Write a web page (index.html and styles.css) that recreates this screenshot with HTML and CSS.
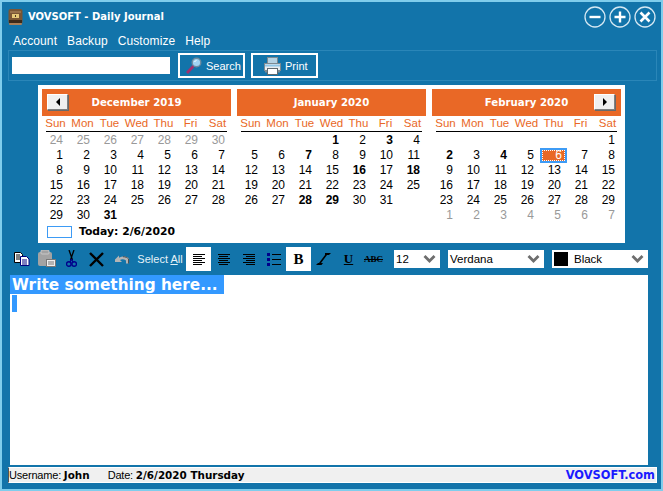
FILE: index.html
```html
<!DOCTYPE html>
<html lang="en">
<head>
<meta charset="utf-8">
<title>VOVSOFT - Daily Journal</title>
<link rel="stylesheet" href="styles.css">
</head>
<body>
<div class="window">
  <header class="titlebar">
    <svg class="logo" width="15" height="16" viewBox="0 0 15 16"><rect x="0.5" y="0" width="14" height="15" rx="2" fill="#7a5533"/><rect x="1" y="11" width="13" height="3" fill="#3d2a1a"/><rect x="1" y="14" width="13" height="2" rx="1" fill="#a9805a"/><rect x="2" y="2" width="11" height="2" fill="#96704a"/><rect x="4" y="5" width="7" height="4" fill="#e6c878"/><rect x="7" y="6" width="1" height="2" fill="#4a3520"/></svg>
    <span class="title">VOVSOFT - Daily Journal</span>
    <div class="winbtns">
      <svg width="22" height="22" viewBox="0 0 22 22"><circle cx="11" cy="11" r="10" fill="none" stroke="#d5e8f3" stroke-width="1.3"/><path d="M5.5 11h11" stroke="#fff" stroke-width="2.4"/></svg>
      <svg width="22" height="22" viewBox="0 0 22 22"><circle cx="11" cy="11" r="10" fill="none" stroke="#d5e8f3" stroke-width="1.3"/><path d="M5.5 11h11M11 5.5v11" stroke="#fff" stroke-width="2.4"/></svg>
      <svg width="22" height="22" viewBox="0 0 22 22"><circle cx="11" cy="11" r="10" fill="none" stroke="#d5e8f3" stroke-width="1.3"/><path d="M6.500 6.500l9 9M15.500 6.500l-9 9" stroke="#fff" stroke-width="2.6"/></svg>
    </div>
  </header>
  <nav class="menu"><span>Account</span><span>Backup</span><span>Customize</span><span>Help</span></nav>
  <div class="searchbar">
    <div class="searchinput"></div>
    <div class="tbtn tbtn-search">
      <svg width="16" height="17" viewBox="0 0 16 17"><path d="M1 16l6.500-7" stroke="#a0306e" stroke-width="2.800"/><circle cx="10.500" cy="5.500" r="4.300" fill="#9fd4f2" stroke="#6d8ba0" stroke-width="1.400"/><path d="M8.500 5a2.500 2.500 0 0 1 2-1.500" stroke="#fff" fill="none"/></svg>
      <span>Search</span>
    </div>
    <div class="tbtn tbtn-print">
      <svg width="17" height="18" viewBox="0 0 17 18"><rect x="3.500" y="0.500" width="10" height="6" fill="#b5d2e3" stroke="#7c8a92"/><rect x="0.500" y="6.500" width="16" height="7" fill="#e8edf0" stroke="#7c8a92"/><rect x="1" y="7.500" width="15" height="2" fill="#8fc6e6"/><rect x="3.500" y="11.500" width="10" height="6" fill="#fff" stroke="#5f6a70"/><rect x="1" y="13.500" width="2" height="2" fill="#7c8a92"/><rect x="14" y="13.500" width="2" height="2" fill="#7c8a92"/></svg>
      <span>Print</span>
    </div>
  </div>

  <section class="calendar">
    <div class="months">
      <div class="month">
        <div class="mhead"><div class="navbtn navbtn-prev"><i class="tri-left"></i></div><span>December 2019</span></div>
        <div class="wdays"><span>Sun</span><span>Mon</span><span>Tue</span><span>Wed</span><span>Thu</span><span>Fri</span><span>Sat</span></div>
        <div class="days">
          <span class="dim">24</span><span class="dim">25</span><span class="dim">26</span><span class="dim">27</span><span class="dim">28</span><span class="dim">29</span><span class="dim">30</span>
          <span>1</span><span>2</span><span>3</span><span>4</span><span>5</span><span>6</span><span>7</span>
          <span>8</span><span>9</span><span>10</span><span>11</span><span>12</span><span>13</span><span>14</span>
          <span>15</span><span>16</span><span>17</span><span>18</span><span>19</span><span>20</span><span>21</span>
          <span>22</span><span>23</span><span>24</span><span>25</span><span>26</span><span>27</span><span>28</span>
          <span>29</span><span>30</span><span class="b">31</span>
        </div>
      </div>
      <div class="month">
        <div class="mhead"><span>January 2020</span></div>
        <div class="wdays"><span>Sun</span><span>Mon</span><span>Tue</span><span>Wed</span><span>Thu</span><span>Fri</span><span>Sat</span></div>
        <div class="days">
          <span></span><span></span><span></span><span class="b">1</span><span>2</span><span class="b">3</span><span>4</span>
          <span>5</span><span>6</span><span class="b">7</span><span>8</span><span>9</span><span>10</span><span>11</span>
          <span>12</span><span>13</span><span>14</span><span>15</span><span class="b">16</span><span>17</span><span class="b">18</span>
          <span>19</span><span>20</span><span>21</span><span>22</span><span>23</span><span>24</span><span>25</span>
          <span>26</span><span>27</span><span class="b">28</span><span class="b">29</span><span>30</span><span>31</span>
        </div>
      </div>
      <div class="month">
        <div class="mhead"><span>February 2020</span><div class="navbtn navbtn-next"><i class="tri-right"></i></div></div>
        <div class="wdays"><span>Sun</span><span>Mon</span><span>Tue</span><span>Wed</span><span>Thu</span><span>Fri</span><span>Sat</span></div>
        <div class="days">
          <span></span><span></span><span></span><span></span><span></span><span></span><span>1</span>
          <span class="b">2</span><span>3</span><span class="b">4</span><span>5</span><span class="sel">6</span><span>7</span><span>8</span>
          <span>9</span><span>10</span><span>11</span><span>12</span><span>13</span><span>14</span><span>15</span>
          <span>16</span><span>17</span><span>18</span><span>19</span><span>20</span><span>21</span><span>22</span>
          <span>23</span><span>24</span><span>25</span><span>26</span><span>27</span><span>28</span><span>29</span>
          <span class="dim">1</span><span class="dim">2</span><span class="dim">3</span><span class="dim">4</span><span class="dim">5</span><span class="dim">6</span><span class="dim">7</span>
        </div>
      </div>
    </div>
    <div class="today"><i class="todaybox"></i><b>Today: 2/6/2020</b></div>
  </section>

  <div class="format">
    <div class="fb"><svg width="16" height="14" viewBox="0 0 16 14"><path d="M.5.5h6l2 2v8h-8z" fill="#fff" stroke="#000"/><path d="M2 3h4M2 5h4M2 7h4" stroke="#000"/><path d="M6.500 4.500h6l2.500 2.500v6.500h-8.500z" fill="#fff" stroke="#000080"/><path d="M8 8h5M8 10h5M8 12h5" stroke="#000080"/></svg></div>
    <div class="fb"><svg width="18" height="18" viewBox="0 0 18 18"><rect x="0" y="2" width="14" height="14" rx="2" fill="#a3a3a3"/><rect x="3" y="0" width="8" height="4" rx="1" fill="#a3a3a3" stroke="#c8c8c8"/><rect x="8.500" y="9.500" width="9" height="7" fill="#eee" stroke="#777"/><path d="M10 12h6M10 14h6" stroke="#777"/></svg></div>
    <div class="fb"><svg width="11" height="18" viewBox="0 0 11 18"><path d="M3 0l3.500 10M8 0L4.500 10" stroke="#000" stroke-width="1.300"/><circle cx="2.800" cy="14" r="2.300" fill="none" stroke="#00008b" stroke-width="1.400"/><circle cx="8.200" cy="14" r="2.300" fill="none" stroke="#00008b" stroke-width="1.400"/><path d="M4 12l1.500-3M7 12L5.500 9" stroke="#00008b" stroke-width="1.300"/></svg></div>
    <div class="fb"><svg width="15" height="15" viewBox="0 0 15 15"><path d="M1 1l13 13M14 1L1 14" stroke="#000" stroke-width="2.400"/></svg></div>
    <div class="fb"><svg width="14" height="9" viewBox="0 0 14 9"><path d="M0 4.500L4 .5v2.200C7 1 11 1 13.500 3v5.500h-2.500V5.500C9 4 6.500 4 5 5l2 2H0z" fill="#b4b4b4"/><path d="M8 1.700c2.500 0 4.500 1 5.500 2.300v4.500" fill="none" stroke="#4f4f4f"/></svg></div>
    <div class="selall">Select <u>A</u>ll</div>
    <div class="fb on"><i class="lines l-left"><s></s><s></s><s></s><s></s><s></s><s></s></i></div>
    <div class="fb"><i class="lines l-center"><s></s><s></s><s></s><s></s><s></s><s></s></i></div>
    <div class="fb"><i class="lines l-right"><s></s><s></s><s></s><s></s><s></s><s></s></i></div>
    <div class="fb"><svg width="14" height="13" viewBox="0 0 14 13"><path d="M0 0h3v3H0zM0 5h3v3H0zM0 10h3v3H0z" fill="#00008b"/><path d="M5 1.500h9M5 6.500h9M5 11.500h9" stroke="#000" stroke-width="1.200"/></svg></div>
    <div class="fb on fmt fmt-b">B</div>
    <div class="fb"><svg width="15" height="12" viewBox="0 0 15 12"><path d="M9 0h6L13 2h-2L5 10h2l-1.500 2H0l2-2h1L9 2z" fill="#000"/></svg></div>
    <div class="fb fmt fmt-u">U</div>
    <div class="fb fmt fmt-s">ABC</div>
    <div class="drop drop-size"><span>12</span><svg class="chev" width="13" height="8" viewBox="0 0 13 8"><path d="M1.500 1l5 5 5-5" fill="none" stroke="#6e6e6e" stroke-width="2.800"/></svg></div>
    <div class="drop drop-font"><span>Verdana</span><svg class="chev" width="13" height="8" viewBox="0 0 13 8"><path d="M1.500 1l5 5 5-5" fill="none" stroke="#6e6e6e" stroke-width="2.800"/></svg></div>
    <div class="drop drop-color"><i class="swatch"></i><span>Black</span><svg class="chev" width="13" height="8" viewBox="0 0 13 8"><path d="M1.500 1l5 5 5-5" fill="none" stroke="#6e6e6e" stroke-width="2.800"/></svg></div>
  </div>

  <main class="editor">
    <div class="line1">Write something here...</div>
    <div class="line2"></div>
  </main>

  <footer class="status">
    <span class="st-user">Username: <b>John</b></span>
    <span class="st-date">Date: <b>2/6/2020 Thursday</b></span>
    <b class="st-brand">VOVSOFT.com</b>
  </footer>
</div>
</body>
</html>
```
FILE: styles.css
```css
* { box-sizing: border-box; }
html, body { margin: 0; padding: 0; }
body { font-family: "Liberation Sans", Arial, sans-serif; font-size: 12px; color: #000; }
.window { width: 663px; height: 491px; background: #1274aa; border: 2px solid #7fcdec; display: flex; flex-direction: column; overflow: hidden; }

.titlebar { height: 29px; display: flex; align-items: center; padding: 0 5px 0 6px; flex: none; }
.logo { flex: none; margin-top: 1px; }
.title { margin-left: 5px; color: #fff; font-family: "DejaVu Sans", Verdana, sans-serif; font-weight: bold; font-size: 10px; }
.winbtns { margin-left: auto; display: flex; gap: 3px; }
.winbtns svg { display: block; }

.menu { height: 19px; display: flex; gap: 10px; padding-left: 11px; color: #fff; align-items: center; flex: none; letter-spacing: 0.1px; }

.searchbar { height: 31px; margin: 0 4px 0 6px; border: 1px solid #2a86b8; display: flex; align-items: center; padding-left: 3px; flex: none; }
.searchinput { width: 158px; height: 17px; background: #fff; }
.tbtn { height: 25px; width: 67px; border: 2px solid #fff; margin-left: 8px; display: flex; align-items: center; color: #fff; padding-left: 6px; gap: 4px; font-size: 11px; }
.tbtn-print { margin-left: 6px; padding-left: 11px; }

.calendar { width: 587px; height: 158px; margin: 4px 0 0 36px; background: #fff; padding: 4px; flex: none; }
.months { display: flex; gap: 6px; height: 134px; }
.month { width: 189px; }
.mhead { height: 27px; background: #e96826; color: #fff; font-family: "DejaVu Sans", Verdana, sans-serif; font-weight: bold; font-size: 10.200px; display: flex; align-items: center; justify-content: center; position: relative; }
.navbtn { position: absolute; top: 5px; width: 21px; height: 16px; background: #f0f0f0; border: 1px solid; border-color: #fff #808080 #808080 #fff; box-shadow: 1px 1px 0 #696969; display: flex; align-items: center; justify-content: center; }
.navbtn-prev { left: 5px; }
.navbtn-next { right: 6px; }
.tri-left { border: 4px solid transparent; border-left: 0; border-right: 4px solid #000; }
.tri-right { border: 4px solid transparent; border-right: 0; border-left: 4px solid #000; }
.wdays { display: grid; grid-template-columns: repeat(7, 27px); height: 15px; color: #e96826; text-align: center; line-height: 15px; font-size: 11.500px; }
.days { margin: 0 4px; border-top: 1px solid #000; padding-top: 1px; display: grid; grid-template-columns: 17px repeat(6, 27px); grid-auto-rows: 15px; line-height: 15px; text-align: right; }
.dim { color: #999; }
.b { font-weight: bold; }
.sel { background: #e96826; color: #fff; border: 2px solid #3d9bf5; outline: 1px dotted #fff; outline-offset: -3px; line-height: 11px; padding-right: 3px; margin-left: 6px; margin-right: -6px; }
.today { display: flex; align-items: center; margin: 1px 0 0 5px; height: 15px; font-family: "DejaVu Sans", Verdana, sans-serif; font-size: 10.800px; }
.todaybox { width: 25px; height: 12px; border: 1px solid #3d9bf5; margin-right: 7px; }

.format { height: 32px; display: flex; align-items: center; padding-left: 7px; flex: none; }
.fb { width: 25px; height: 24px; display: flex; align-items: center; justify-content: center; flex: none; }
.fb.on { background: #fff; }
.selall { width: 52px; color: #e6f2f8; text-align: center; font-size: 11px; flex: none; }
.lines { display: flex; flex-direction: column; gap: 1px; width: 12px; }
.lines s { display: block; width: 12px; height: 1px; background: #000; }
.lines s:nth-child(even) { width: 9px; }
.l-center { align-items: center; }
.l-right { align-items: flex-end; }
.fmt { font-family: "Liberation Serif", "Times New Roman", serif; font-weight: bold; color: #000; }
.fmt-b { font-size: 15px; }
.fmt-u { font-size: 13px; text-decoration: underline; }
.fmt-s { font-size: 9px; text-decoration: line-through; }
.drop { height: 18px; background: #fff; display: flex; align-items: center; margin-left: 8px; padding: 0 4px 0 2px; flex: none; font-size: 11.500px; position: relative; }
.drop .chev { margin-left: auto; }
.drop-size { width: 46px; }
.drop-font { width: 96px; }
.drop-color { width: 96px; }
.swatch { width: 14px; height: 14px; background: #000; margin-right: 6px; }

.editor { width: 638px; height: 190px; margin-left: 8px; background: #fff; flex: none; }
.line1 { display: inline-block; background: #3399ff; color: #fff; font-family: "DejaVu Sans", Verdana, sans-serif; font-weight: bold; font-size: 15.300px; height: 19px; line-height: 21px; padding: 0 6px 0 2px; vertical-align: top; overflow: hidden; }
.line2 { width: 5px; height: 17px; margin: 1px 0 0 2px; background: #3399ff; }

.status { height: 16px; margin: 2px 4px 0 6px; background: #f0f0f0; border: 1px solid #fff; border-left-color: #555; display: flex; align-items: center; padding: 0 1px 0 0; font-size: 11px; letter-spacing: -0.2px; flex: none; }
.status b { font-family: "DejaVu Sans", Verdana, sans-serif; font-size: 10.400px; letter-spacing: 0; }
.st-date { margin-left: 18px; }
.status .st-brand { margin-left: auto; color: #1a1aff; font-size: 11.400px; }
```
